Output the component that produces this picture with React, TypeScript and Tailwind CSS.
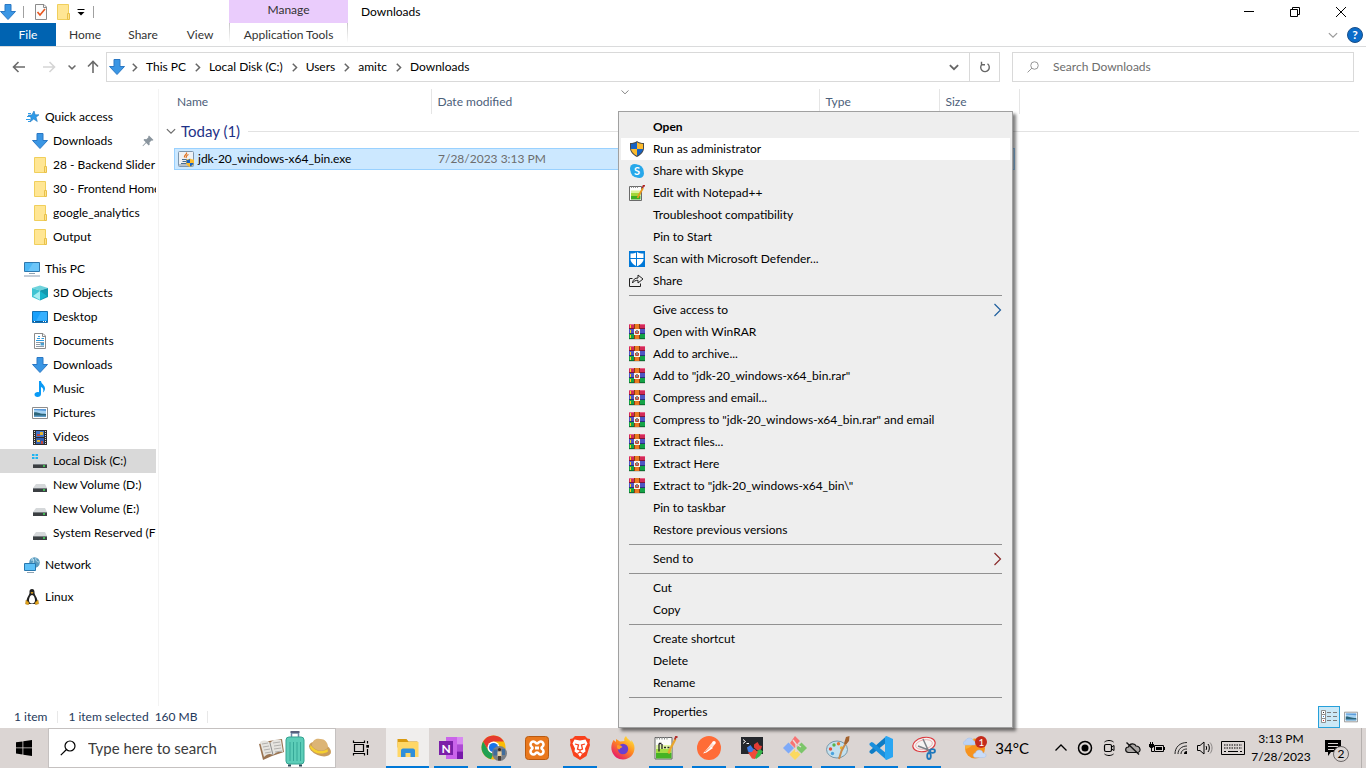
import React from "react";

type IconProps = { className?: string };

const svgProps = {
  xmlns: "http://www.w3.org/2000/svg",
  "aria-hidden": true,
  fill: "none",
};

/* ---------- small icons, 16 grid ---------- */

const DownArrowIcon = ({ className = "size-4" }: IconProps) => (
  <svg {...svgProps} viewBox="0 0 16 16" className={className}>
    <path d="M5 .5h6v7h4.5L8 15.5.5 7.500H5z" fill="#3a96e4" stroke="#2b78c4" />
  </svg>
);

const FolderIcon = ({ className = "size-4" }: IconProps) => (
  <svg {...svgProps} viewBox="0 0 16 16" className={className}>
    <path d="M2.500.5h11v15h-11z" fill="#ffe694" stroke="#f0cf5c" />
    <path d="M12.500 9.500h2v6h-2z" fill="#ffe38a" stroke="#e8c04a" />
  </svg>
);

const StarIcon = () => (
  <svg {...svgProps} viewBox="0 0 16 16" className="size-4">
    <path d="M10 2l1.200 3.800H15l-3 2.500 1.300 4.200-3.600-2.400L6 13l1.200-4.300L4 6.200l3.800-.3z" fill="#2f9be8" stroke="#1b76c0" strokeWidth=".6" />
    <path d="M4 4.500h3M3 7.500h3M2 10.500h4M4 12.500h2" stroke="#2f9be8" />
  </svg>
);

const PinIcon = () => (
  <svg {...svgProps} viewBox="0 0 12 12" className="size-3">
    <path d="M7 .5L11.500 5l-1.300.8-.7-.2-2 2 .2 2-.9.9-2.600-2.600L1 11.200l-.5-.5 3.200-3.400L1.500 5l.9-.9 2 .2 2-2-.2-.8z" fill="#8a959e" />
  </svg>
);

const ThisPcIcon = () => (
  <svg {...svgProps} viewBox="0 0 16 16" className="size-4">
    <path d="M.5 1.500h15v9H.5z" fill="#4db8f5" stroke="#2f78ad" />
    <path d="M9 2h6v8H4z" fill="#6cc6f9" />
    <path d="M5 12.500h6" stroke="#8fa3b3" />
    <path d="M0 15h16" stroke="#8b9cb0" />
  </svg>
);

const ObjectsIcon = () => (
  <svg {...svgProps} viewBox="0 0 16 16" className="size-4">
    <path d="M0 3l8-2.500L16 3 8 5.500z" fill="#6fd3dc" />
    <path d="M0 3l8 2.500v10L0 12z" fill="#3fc4d2" />
    <path d="M16 3L8 5.500v10l8-3.500z" fill="#1198ae" />
    <path d="M1 11l7-5v9z" fill="#a6eef2" />
    <path d="M8 6l7 5-7 4z" fill="#16b5cc" />
  </svg>
);

const DesktopIcon = () => (
  <svg {...svgProps} viewBox="0 0 16 16" className="size-4">
    <path d="M.5 2.500h15v11H.5z" fill="#18a0fb" stroke="#1271b5" />
    <path d="M9 3h6v8L4 12z" fill="#36b0ff" />
    <path d="M1 12.500h14" stroke="#0f5c96" />
    <path d="M2 12.500h1M11 12.500h1M13 12.500h1" stroke="#fff" />
  </svg>
);

const DocumentsIcon = () => (
  <svg {...svgProps} viewBox="0 0 16 16" className="size-4">
    <path d="M2.500.5H11l2.500 2.500v12.500h-11z" fill="#fff" stroke="#8b8b8b" />
    <path d="M10.500.5v3h3" stroke="#8b8b8b" />
    <path d="M6 3.500h2M5 5.500h3M9.500 5.500H12M4 7.500h8" stroke="#2c9be0" />
    <path d="M4 9.500h8M4 11.500h4M4 13.500h8" stroke="#8f9aa5" />
    <path d="M8.500 10h3.500v2.500H8.500z" fill="#4a9fd0" />
  </svg>
);

const MusicIcon = () => (
  <svg {...svgProps} viewBox="0 0 16 16" className="size-4">
    <path d="M7 0h2c.2 3 4 4 4 7.500 0 1.600-.8 3-2 4 .8-2.900.2-4.500-2-5.500v7c0 1.800-1.500 3-3.500 3-1.800 0-3-1-3-2.400C2.500 12 4 11 5.700 11c.5 0 .9 0 1.300.2z" fill="#0a9af5" />
  </svg>
);

const PicturesIcon = ({ className = "size-4" }: IconProps) => (
  <svg {...svgProps} viewBox="0 0 16 16" className={className}>
    <path d="M.5 2.500h15v11H.5z" fill="#fff" stroke="#8d8d8d" />
    <path d="M2 4h12v8H2z" fill="#a5d2f3" />
    <path d="M2 4h12v2L2 5z" fill="#5b9bdb" />
    <path d="M2 7.500c3-.8 5 1.500 12 1.500v2H2z" fill="#2d6579" />
    <path d="M2 10.500h12V12H2z" fill="#5f9cc7" />
  </svg>
);

const VideosIcon = () => (
  <svg {...svgProps} viewBox="0 0 16 16" className="size-4">
    <path d="M1 1h14v15H1z" fill="#2d2d2d" />
    <path d="M2.500 2v14M13.500 2v14" stroke="#dcdcdc" strokeDasharray="1 1" />
    <path d="M4 2h8v6H4z" fill="#3f74c8" />
    <path d="M4 9h8v6H4z" fill="#315fb0" />
    <path d="M8 3h3v3H8zM5 11h3v2H5z" fill="#e4b630" />
    <path d="M5 5h3v2H5zM9 12h2v3H9z" fill="#c4473a" />
  </svg>
);

const DriveIcon = ({ system }: { system?: boolean }) => (
  <svg {...svgProps} viewBox="0 0 16 16" className="size-4">
    <path d="M4 7h9l2 4H1z" fill="#d5d8da" />
    <path d="M1 11h14v4H1z" fill="#3b3f42" />
    <path d="M1 11.500h14" stroke="#777c80" />
    <path d="M11 13h2" stroke="#43e05a" strokeWidth="1.500" />
    {system && <path d="M0 1h2.500v2H0zM3.500 1H6v2H3.500zM0 4h2.500v2H0zM3.500 4H6v2H3.500z" fill="#1fb4f1" />}
  </svg>
);

const NetworkIcon = () => (
  <svg {...svgProps} viewBox="0 0 16 16" className="size-4">
    <circle cx="10.500" cy="5.500" r="5.300" fill="#5b9bbf" />
    <path d="M8 1c2 1 2 3 1 5m3-5c-1 2 1 4 3 4M7 3h3" stroke="#bfe2f1" />
    <path d="M.5 6.500h11v7H.5z" fill="#5cc0f8" stroke="#2878ae" />
    <path d="M3 15.500h7" stroke="#8fa3b3" />
  </svg>
);

const LinuxIcon = () => (
  <svg {...svgProps} viewBox="0 0 16 16" className="size-4">
    <path d="M8 0C6 0 5.300 1.500 5.500 3.500c.2 2.500-2.800 4.500-3 9L5 15h6l2.500-2.500c0-4-3-6.500-3-9C10.500 1.500 10 0 8 0z" fill="#222" />
    <path d="M8 6c-1.700 0-3 3-3 5.500 0 1.800 1.300 3 3 3s3-1.200 3-3C11 9 9.700 6 8 6z" fill="#fff" />
    <path d="M6.500 3.500L8 3l1.500.6L8 5z" fill="#e9a81c" />
    <path d="M2 11l3 2.500-.5 2.200L1.500 15zM14 11l-3 2.500.5 2.200 3.200-1z" fill="#e5a51a" stroke="#9b6b0a" strokeWidth=".4" />
  </svg>
);

const ShieldIcon = ({ className = "size-4" }: IconProps) => (
  <svg {...svgProps} viewBox="0 0 16 16" className={className}>
    <path d="M8 0c2 1.500 4 2 7 2v5c0 4-3 7-7 9-4-2-7-5-7-9V2c3 0 5-.5 7-2z" fill="#4a4a48" />
    <path d="M8 1.300V8H2V3c2.400 0 4.200-.5 6-1.700z" fill="#1763c4" />
    <path d="M8 1.300V8h6V3c-2.400 0-4.200-.5-6-1.700z" fill="#fdbb2d" />
    <path d="M2 8h6v6.800C4.800 13 2.300 11 2 8z" fill="#fdbb2d" />
    <path d="M14 8H8v6.800c3.200-1.800 5.700-3.800 6-6.800z" fill="#1763c4" />
  </svg>
);

const SkypeIcon = () => (
  <svg {...svgProps} viewBox="0 0 16 16" className="size-4">
    <circle cx="5.500" cy="5.500" r="4.500" fill="#28a8ea" />
    <circle cx="10.500" cy="10.500" r="4.500" fill="#28a8ea" />
    <circle cx="8" cy="8" r="6.500" fill="#28a8ea" />
    <text x="8" y="12" textAnchor="middle" fontSize="11" fontWeight="700" fill="#fff">S</text>
  </svg>
);

const NotepadIcon = ({ className = "size-4" }: IconProps) => (
  <svg {...svgProps} viewBox="0 0 16 16" className={className}>
    <path d="M.5 1.500h12v14H.5z" fill="#fdfdfd" stroke="#6a6a6a" />
    <path d="M2 5.500h9.500v4.500H2z" fill="#dcf29a" />
    <path d="M2 8h9.500v3H2z" fill="#a3d63a" />
    <path d="M2 11h9.500v3.500H2z" fill="#3fae22" />
    <path d="M2.500 1v2M4.500 1v2M6.500 1v2M8.500 1v2" stroke="#777" strokeWidth=".8" />
    <path d="M14 3L9.500 11l-.9 2" stroke="#e89a1e" strokeWidth="1.800" />
    <path d="M13.500 3l1-2.500 1.500.5" stroke="#ad2323" strokeWidth="1.600" />
  </svg>
);

const DefenderIcon = () => (
  <svg {...svgProps} viewBox="0 0 16 16" className="size-4">
    <path d="M0 0h16v16H0z" fill="#0078d7" />
    <path d="M8 1C6.300 2.300 4 2.600 1.500 2.600V8c0 3.300 3 5.800 6.500 7.300 3.500-1.500 6.500-4 6.500-7.300V2.600C12 2.600 9.700 2.300 8 1z" fill="#fff" />
    <path d="M7.500 1v14M1 7.500h14" stroke="#0078d7" />
  </svg>
);

const ShareIcon = () => (
  <svg {...svgProps} viewBox="0 0 16 16" className="size-4">
    <path d="M3.500 5.500h-3v8h11v-3" stroke="#222" />
    <path d="M3.500 10c.4-3.500 2.500-5 5.500-5V2l5 4-5 4V7.300C6.500 7.300 4.800 8 3.500 10z" stroke="#222" strokeLinejoin="round" />
  </svg>
);

const WinrarIcon = () => (
  <svg {...svgProps} viewBox="0 0 16 16" className="size-4">
    <path d="M0 0h16v5H0z" fill="#d42a58" />
    <path d="M0 5h16v5H0z" fill="#4f55c4" />
    <path d="M0 10h16v5H0z" fill="#14a347" />
    <path d="M0 .5h16" stroke="#e8638a" />
    <path d="M0 4.500h16" stroke="#7d1436" />
    <path d="M0 9.500h16" stroke="#2b2f7c" />
    <path d="M0 14.500h16" stroke="#0b7030" />
    <path d="M0 15.500h16" stroke="#c9cfc9" />
    <path d="M1.500 1v3M1.500 6v3M1.500 11v3" stroke="#f4d322" />
    <path d="M6 0h4v15H6z" fill="#ea7a22" />
    <path d="M5.500 0v15M10.500 0v15" stroke="#8b3a14" />
    <path d="M5 5h6v6H5z" fill="#f6f3ee" />
    <path d="M7 6h2v3H7z" fill="#8a8a8a" />
    <path d="M6.500 7v2.500h3V7" stroke="#c5432e" />
  </svg>
);

const JavaIcon = () => (
  <svg {...svgProps} viewBox="0 0 16 16" className="size-4">
    <rect x=".5" y=".5" width="15" height="15" rx="1" fill="#eef1f4" stroke="#7c95ac" />
    <path d="M1 13h14v2H1z" fill="#b4bfca" />
    <path d="M8.500 1.500c1 2-3 2.600-2 5M10.500 3.500C8 4 8.500 5.500 8 7" stroke="#e0701c" strokeWidth="1.200" />
    <path d="M4 8.500h5M4.500 10.500h4M3 12.500h6" stroke="#4a6f92" />
    <path d="M12 7.500c1.300.8 2.300 1 4 1v3c0 2-2 3.600-4 4.500-2-.9-4-2.500-4-4.500v-3c1.700 0 2.700-.2 4-1z" fill="#fdbb2d" />
    <path d="M12 8v4H8.500V9c1.300 0 2.400-.3 3.500-1zM12 12h3.500c-.2 1.700-2 2.800-3.500 3.500z" fill="#1763c4" />
  </svg>
);

const ChevronIcon = ({ className = "size-4", weight = 1.3 }: IconProps & { weight?: number }) => (
  <svg {...svgProps} viewBox="0 0 16 16" className={className}>
    <path d="M2.500 5.500L8 11l5.500-5.500" stroke="currentColor" strokeWidth={weight} />
  </svg>
);

const MagnifierIcon = ({ className = "size-4" }: IconProps) => (
  <svg {...svgProps} viewBox="0 0 16 16" className={className}>
    <circle cx="10" cy="6" r="5" stroke="currentColor" strokeWidth="1.200" />
    <path d="M6.500 9.500L.8 15.200" stroke="currentColor" strokeWidth="1.200" />
  </svg>
);

const ArrowIcon = ({ className = "size-4" }: IconProps) => (
  <svg {...svgProps} viewBox="0 0 16 16" className={className}>
    <path d="M14 8H2.500M7.500 3L2.500 8l5 5" stroke="currentColor" strokeWidth="1.600" />
  </svg>
);

/* ---------- taskbar icons, 24 grid ---------- */

const WindowsIcon = () => (
  <svg {...svgProps} viewBox="0 0 16 16" className="size-4">
    <path d="M0 2.300l6.500-.9v6.100H0zM7.300 1.300L16 0v7.500H7.300zM0 8.300h6.500v6.200L0 13.600zM7.300 8.300H16V16l-8.700-1.300z" fill="#000" />
  </svg>
);

const TaskViewIcon = () => (
  <svg {...svgProps} viewBox="0 0 18 16" className="h-4 w-[18px]">
    <path d="M2.500 4.500h9v7h-9zM1.500.5v2h11v-2M1.500 15.500v-2h11v2M15.500 1v2.500M15.500 9v6" stroke="#000" strokeWidth="1.200" />
    <path d="M14.300 5h2.700v2.700h-2.700z" fill="#000" />
  </svg>
);

const SearchArtIcon = () => (
  <svg {...svgProps} viewBox="0 0 74 38" className="h-[38px] w-[74px] shrink-0">
    {/* open book */}
    <path d="M0 15l10-3 13-2 2 13-12 4-9 4z" fill="#9a7452" />
    <path d="M1 13c4-2 7-2 10 1 3-4 7-4 11-3l2 12c-4-1-7 0-10 3-3-2-6-1-9 2z" fill="#e6e4df" />
    <path d="M11 14l3 12" stroke="#8c8c8c" />
    <path d="M3 15l6-1M4 18l6-1M5 21l6-1M6 24l6-1M14 14l7-1M15 17l7-1M15 20l7-1M16 23l7-1" stroke="#a3a29f" strokeWidth=".8" />
    {/* suitcase */}
    <path d="M32.500 9V4h7v5" stroke="#6f86a6" strokeWidth="1.500" />
    <path d="M31.500 3h9" stroke="#59607c" strokeWidth="2" />
    <rect x="27" y="8" width="18" height="27" rx="3" fill="#5ccdb8" stroke="#34a391" />
    <path d="M31 13v19M34.500 13v19M38 13v19M41.500 13v19" stroke="#36a898" />
    <path d="M29 36.500h3M40 36.500h3" stroke="#2d4b59" strokeWidth="2" />
    {/* hat */}
    <ellipse cx="61" cy="20" rx="11.500" ry="6.500" transform="rotate(22 61 20)" fill="#c99c5b" />
    <path d="M53 17c0-6 4-8 8-7 4-.5 8 3 8 8-4 6-12 4-16-1z" fill="#dcb475" />
    <path d="M51.500 16c4 6 11 8 17 4l.5 2.500c-6 4-15 2-18-4z" fill="#f6d02f" />
  </svg>
);

const ExplorerIcon = () => (
  <svg {...svgProps} viewBox="0 0 24 24" className="size-6">
    <path d="M1.500 3h9l2 2.500h9v6h-20z" fill="#d99a10" />
    <path d="M1.500 6h21v15h-21z" fill="#ffd767" />
    <path d="M5 21v-6.500c0-1 .8-2 2-2h10c1.200 0 2 1 2 2V21h-4.500v-4h-5v4z" fill="#2f8fdb" />
  </svg>
);

const OneNoteIcon = () => (
  <svg {...svgProps} viewBox="0 0 24 24" className="size-6">
    <path d="M7 1h17v22H7z" fill="#ca64ea" />
    <path d="M18 1h6v7.500h-6z" fill="#d889f1" />
    <path d="M18 8.500h6v7h-6z" fill="#ae4bd5" />
    <path d="M18 15.500h6V23h-6z" fill="#7719aa" />
    <path d="M0 5h14v14H0z" fill="#7b1fa8" />
    <text x="7" y="16.500" textAnchor="middle" fontSize="12" fontWeight="700" fill="#fff">N</text>
  </svg>
);

const ChromeIcon = () => (
  <svg {...svgProps} viewBox="0 0 26 26" className="size-[26px]">
    <circle cx="12.500" cy="12.500" r="12" fill="#fbbc04" />
    <path d="M2.100 6.500A12 12 0 0 1 22.900 6.500H12.500L7.300 15.500z" fill="#e53a2e" />
    <path d="M2.100 6.500l5.200 9 5.200 3L10 24.200A12 12 0 0 1 2.100 6.500z" fill="#21a052" />
    <circle cx="12.500" cy="12.500" r="6" fill="#fff" />
    <circle cx="12.500" cy="12.500" r="4.600" fill="#1a73e8" />
    <circle cx="18.500" cy="18.500" r="7.500" fill="#7b7f85" />
    <path d="M12.500 14.500h4v6h-4zM21 14h3v6h-3z" fill="#3f6c9c" />
    <circle cx="18.500" cy="14.500" r="1.600" fill="#3c2a20" />
    <path d="M16.500 16.500h4v5h-4z" fill="#e9cfa0" />
    <path d="M17 21h3v4.500h-3z" fill="#493f3a" />
  </svg>
);

const XamppIcon = () => (
  <svg {...svgProps} viewBox="0 0 24 24" className="size-6">
    <rect x=".5" y=".5" width="23" height="23" rx="3" fill="#e9781d" stroke="#b95a10" />
    <path d="M8.500 5.500a3 3 0 0 0-3 3c0 2.500 2 2 2 3.500s-2 1-2 3.500a3 3 0 0 0 3 3c2 0 2-2 3.500-2s1.500 2 3.500 2a3 3 0 0 0 3-3c0-2.500-2-2-2-3.500s2-1 2-3.500a3 3 0 0 0-3-3c-2 0-2 2-3.500 2s-1.500-2-3.500-2z" stroke="#fff" strokeWidth="2.600" />
    <path d="M10 12h4" stroke="#fff" strokeWidth="3" />
  </svg>
);

const BraveIcon = () => (
  <svg {...svgProps} viewBox="0 0 24 24" className="size-6">
    <path d="M7 0h10l2.500 2.500L22 3l-.5 4 .5 2-3.500 11L12 24l-6.500-4L2 9l.5-2L2 3l2.500-.5z" fill="#f9421d" />
    <path d="M12 4.500l5.500-1 2 4-2.500 5 .5 3L14 18l-2 3-2-3-3.500-2.500.5-3-2.500-5 2-4z" fill="#fff" />
    <path d="M7 8l3.500 1-1 4 2.500 1 2.500-1-1-4L17 8M12 14v3M9.500 17.500L12 16l2.500 1.500" stroke="#f9421d" strokeWidth="1.300" />
  </svg>
);

const FirefoxIcon = () => (
  <svg {...svgProps} viewBox="0 0 24 24" className="size-6">
    <defs>
      <linearGradient id="fx" x1="20" y1="2" x2="5" y2="22" gradientUnits="userSpaceOnUse">
        <stop stopColor="#ffe03c" />
        <stop offset=".45" stopColor="#ff8a1f" />
        <stop offset="1" stopColor="#e6186c" />
      </linearGradient>
    </defs>
    <path d="M15 0c-2 2-2 3.500-1.500 5L9 5.500 5 3v3L2.500 4C.8 7-.5 11 1 15.500 2.700 20.500 7 23.500 12 23.500c6.500 0 11.500-5 11.500-11.500 0-3.500-1.500-6-3.500-8l.5 2.500C19 4 16 3 15 0z" fill="url(#fx)" />
    <circle cx="12" cy="13" r="5.200" fill="#6b3fd0" />
    <path d="M6 9.500c2-1 4 0 5.500 1.500-1 1-2.500.5-3 2.500-2 0-3-2-2.500-4z" fill="#ff9a24" />
  </svg>
);

const NotepadPlusIcon = () => (
  <svg {...svgProps} viewBox="0 0 24 24" className="size-6">
    <path d="M1 1.500h17V23H1z" fill="#fbfcf9" stroke="#666" />
    <path d="M2 9h15.500v5H2z" fill="#dff5a4" />
    <path d="M2 13h15.500v4H2z" fill="#a6de44" />
    <path d="M2 17h15.500v5.500H2z" fill="#46b324" />
    <path d="M3 1v2.500M5.500 1v2.500M8 1v2.500M10.500 1v2.500M13 1v2.500" stroke="#888" />
    <path d="M5 7.500v8M8 8v5M5 7.500h2.500M10 11.500h2M13.500 11.500h2" stroke="#222" strokeWidth="1.300" />
    <path d="M21.500 3l-5.500 10.500-1.500 4" stroke="#e9a52c" strokeWidth="2.200" />
    <path d="M20.800 3.500l1.200-3 1.500 1" stroke="#b33030" strokeWidth="1.800" />
  </svg>
);

const PostmanIcon = () => (
  <svg {...svgProps} viewBox="0 0 24 24" className="size-6">
    <circle cx="12" cy="12" r="12" fill="#ff6c37" />
    <path d="M6 17.500l7-8 3 2.500-6.500 4.500z" fill="#fff" />
    <path d="M12.500 9.500l3-3.500 2.500 2-2.500 3.500z" fill="#ffe0d3" />
    <circle cx="17" cy="6.800" r="1.800" fill="#fff" />
    <path d="M8 16l5.500-5" stroke="#ff6c37" strokeWidth=".7" />
  </svg>
);

const TerminalIcon = () => (
  <svg {...svgProps} viewBox="0 0 24 24" className="size-6">
    <path d="M1 1h22v17H1z" fill="#24272c" />
    <path d="M3 3.500l2.500 2L3 7.500M6.500 7.500H9" stroke="#fff" />
    <path d="M7 11.500l3.500-2.500 2.500 3.500 3 1.500-4 3.500-4-2z" fill="#3a7be8" />
    <path d="M14 8.500l3.500-2.500 2 3.500 2.500.5-1 3.500-3.500 1-3.500-3z" fill="#e23c34" />
    <path d="M16 16l4-3 3 2.500-3 4.500-4 3-3-3z" fill="#37b34a" />
    <path d="M8 16.500l4-.5 2-3 4 3-2 3-1 4-3-.5z" fill="#f04a3a" />
  </svg>
);

const GitIcon = () => (
  <svg {...svgProps} viewBox="0 0 24 24" className="size-6">
    <path d="M12 0l5 5-2.500 2.500 1 1.500-3.500 3-5-5z" fill="#f77474" />
    <path d="M5.500 6.500l5.500 5.500-5.500 5.500L0 12z" fill="#7eaaf8" />
    <path d="M18.500 6.500L24 12l-5.500 5.500L13 12z" fill="#7cc66a" />
    <path d="M12 13l5.500 5.500L12 24l-5.500-5.500z" fill="#fbd95f" />
    <path d="M10 4l3 4v8M13 8l5 3" stroke="#e6dcd8" strokeWidth="1.400" />
  </svg>
);

const PaintIcon = () => (
  <svg {...svgProps} viewBox="0 0 24 24" className="size-6">
    <ellipse cx="11" cy="13.500" rx="10.500" ry="8.500" fill="#c3e0ee" stroke="#7797a8" />
    <circle cx="4.500" cy="13" r="1.700" fill="#e04f3b" />
    <circle cx="8" cy="9" r="1.700" fill="#5ab44c" />
    <circle cx="12.500" cy="7.800" r="1.700" fill="#e8742f" />
    <circle cx="15.500" cy="12" r="1.700" fill="#ecb52a" />
    <circle cx="6.500" cy="17.500" r="1.700" fill="#4aa3df" />
    <path d="M21.500 4l-6 11-2.500 8" stroke="#c98a4c" strokeWidth="2" />
    <path d="M20 1l3.500-1-.5 5-3 3.500-2-1z" fill="#a3622e" />
  </svg>
);

const VsCodeIcon = () => (
  <svg {...svgProps} viewBox="0 0 24 24" className="size-6">
    <path d="M17.500 0v6.500L4 17.500 2.500 18 .5 16.500v-1.500z" fill="#0e7cc4" />
    <path d="M17.500 24v-6.500L4 6.500 2.500 6 .5 7.500V9z" fill="#1a8fdc" />
    <path d="M17.500 0L24 3v18l-6.500 3-1.500-1V1z" fill="#2aa6f2" />
  </svg>
);

const SnipIcon = () => (
  <svg {...svgProps} viewBox="0 0 24 24" className="size-6">
    <ellipse cx="12" cy="8.500" rx="11.300" ry="7" transform="rotate(-12 12 8.500)" fill="#f5f3f2" stroke="#dc3a3f" strokeWidth="1.200" />
    <ellipse cx="12" cy="8.500" rx="8.500" ry="4.600" transform="rotate(-12 12 8.500)" stroke="#e9a3a5" strokeWidth=".8" />
    <path d="M11 3l6 13M6 10l12 4.500" stroke="#7c8288" strokeWidth="1.500" />
    <ellipse cx="20.500" cy="15" rx="2.500" ry="1.800" stroke="#1d77bb" strokeWidth="1.800" />
    <ellipse cx="17" cy="20" rx="1.800" ry="3" stroke="#1d77bb" strokeWidth="1.800" />
  </svg>
);

const WeatherIcon = () => (
  <svg {...svgProps} viewBox="0 0 24 24" className="size-6">
    <circle cx="12" cy="12.500" r="10" fill="#f7931e" />
    <path d="M2 13a10 10 0 0 1 9-10c0 5-3 9-9 10z" fill="#fbb034" />
    <path d="M2.500 9C-.5 9-.5 5 2.500 5c.5-4 7.500-4 8 0 3 0 3 4 .5 4z" fill="#bcd3f5" stroke="#a3bfea" strokeWidth=".5" />
    <path d="M12.500 21.500c-3 0-3-4.500 0-4.500.5-4 7-4 7.500 0 4 0 4 4.500.5 4.500z" fill="#c9dcf8" stroke="#a3bfea" strokeWidth=".5" />
  </svg>
);

const RecordIcon = () => (
  <svg {...svgProps} viewBox="0 0 16 16" className="size-4">
    <circle cx="8" cy="8" r="6.500" stroke="#000" strokeWidth="1.500" />
    <circle cx="8" cy="8" r="3.500" fill="#000" />
  </svg>
);

const MeetIcon = () => (
  <svg {...svgProps} viewBox="0 0 16 16" className="size-4">
    <rect x="3.500" y="4.500" width="7" height="7" rx="1.500" stroke="#000" strokeWidth="1.200" />
    <path d="M10.500 7l2.500-1.500v5L10.500 9M3.500 2C6 0 10 0 12.500 2M3.500 14c2.500 2 6.500 2 9 0" stroke="#000" />
  </svg>
);

const CloudOffIcon = () => (
  <svg {...svgProps} viewBox="0 0 16 16" className="size-4">
    <path d="M3.500 12.500c-4-.5-3.500-5.500 0-5.500 1-4 6.500-4 7.500-1 4.500 0 5.500 6 1.500 6.500z" fill="#a9a5a3" stroke="#111" strokeWidth="1.200" />
    <path d="M1.500 2.500l12.500 12" stroke="#111" strokeWidth="1.400" />
  </svg>
);

const BatteryIcon = () => (
  <svg {...svgProps} viewBox="0 0 16 16" className="size-4">
    <path d="M5.500 5.500h9v6h-9z" stroke="#000" />
    <path d="M7 7h6v3H7zM15 7h1v3h-1z" fill="#000" />
    <path d="M0 4h5v2.500L3.500 8h-2L0 6.500z" fill="#000" />
    <path d="M1.500 2v2M3.500 2v2M2.500 8v3.500H5" stroke="#000" />
  </svg>
);

const WifiIcon = () => (
  <svg {...svgProps} viewBox="0 0 16 16" className="size-4">
    <path d="M2 14C2 7 7 2.500 14 2.500M5 14c0-4.500 3.500-8 9-8M8 14c0-2.800 2.300-5 6-5" stroke="#222" />
    <path d="M11 14a3 3 0 0 1 3-3v3z" fill="#000" />
  </svg>
);

const VolumeIcon = () => (
  <svg {...svgProps} viewBox="0 0 16 16" className="size-4">
    <path d="M.5 5.500h2.500L7 2v12L3 10.500H.5z" stroke="#000" />
    <path d="M9 6c.8 1 .8 3 0 4M11 4c1.800 2 1.800 6 0 8" stroke="#000" />
    <path d="M13 2.500c2.700 3 2.700 8 0 11" stroke="#8a8685" />
  </svg>
);

const KeyboardIcon = () => (
  <svg {...svgProps} viewBox="0 0 24 14" className="h-3.5 w-6">
    <path d="M.5.5h23v13H.5z" stroke="#000" />
    <path d="M3 4h18M3 7h18" stroke="#000" strokeWidth="1.200" strokeDasharray="1.500 1" />
    <path d="M3 10.500h2M7 10.500h10M19 10.500h2" stroke="#000" strokeWidth="1.200" />
  </svg>
);

/* ---------- data ---------- */

interface NavItem {
  label: string;
  icon: React.ReactNode;
  pinned?: boolean;
  active?: boolean;
}

interface MenuItem {
  label: string;
  icon?: React.ReactNode;
  bold?: boolean;
  hover?: boolean;
  arrow?: string;
}

const quickAccess: NavItem[] = [
  { label: "Downloads", icon: <DownArrowIcon />, pinned: true },
  { label: "28 - Backend Slider", icon: <FolderIcon /> },
  { label: "30 - Frontend Home", icon: <FolderIcon /> },
  { label: "google_analytics", icon: <FolderIcon /> },
  { label: "Output", icon: <FolderIcon /> },
];

const thisPc: NavItem[] = [
  { label: "3D Objects", icon: <ObjectsIcon /> },
  { label: "Desktop", icon: <DesktopIcon /> },
  { label: "Documents", icon: <DocumentsIcon /> },
  { label: "Downloads", icon: <DownArrowIcon /> },
  { label: "Music", icon: <MusicIcon /> },
  { label: "Pictures", icon: <PicturesIcon /> },
  { label: "Videos", icon: <VideosIcon /> },
  { label: "Local Disk (C:)", icon: <DriveIcon system />, active: true },
  { label: "New Volume (D:)", icon: <DriveIcon /> },
  { label: "New Volume (E:)", icon: <DriveIcon /> },
  { label: "System Reserved (F:)", icon: <DriveIcon /> },
];

const tree: { label: string; icon: React.ReactNode; items: NavItem[] }[] = [
  { label: "Quick access", icon: <StarIcon />, items: quickAccess },
  { label: "This PC", icon: <ThisPcIcon />, items: thisPc },
  { label: "Network", icon: <NetworkIcon />, items: [] },
  { label: "Linux", icon: <LinuxIcon />, items: [] },
];

const menuGroups: MenuItem[][] = [
  [
    { label: "Open", bold: true },
    { label: "Run as administrator", icon: <ShieldIcon />, hover: true },
    { label: "Share with Skype", icon: <SkypeIcon /> },
    { label: "Edit with Notepad++", icon: <NotepadIcon /> },
    { label: "Troubleshoot compatibility" },
    { label: "Pin to Start" },
    { label: "Scan with Microsoft Defender...", icon: <DefenderIcon /> },
    { label: "Share", icon: <ShareIcon /> },
  ],
  [
    { label: "Give access to", arrow: "text-[#1f5f9e]" },
    { label: "Open with WinRAR", icon: <WinrarIcon /> },
    { label: "Add to archive...", icon: <WinrarIcon /> },
    { label: 'Add to "jdk-20_windows-x64_bin.rar"', icon: <WinrarIcon /> },
    { label: "Compress and email...", icon: <WinrarIcon /> },
    { label: 'Compress to "jdk-20_windows-x64_bin.rar" and email', icon: <WinrarIcon /> },
    { label: "Extract files...", icon: <WinrarIcon /> },
    { label: "Extract Here", icon: <WinrarIcon /> },
    { label: 'Extract to "jdk-20_windows-x64_bin\\"', icon: <WinrarIcon /> },
    { label: "Pin to taskbar" },
    { label: "Restore previous versions" },
  ],
  [{ label: "Send to", arrow: "text-[#8a2a2a]" }],
  [{ label: "Cut" }, { label: "Copy" }],
  [{ label: "Create shortcut" }, { label: "Delete" }, { label: "Rename" }],
  [{ label: "Properties" }],
];

const taskbarApps = [
  { name: "File Explorer", icon: <ExplorerIcon />, state: "active" },
  { name: "OneNote", icon: <OneNoteIcon />, state: "running" },
  { name: "Chrome", icon: <ChromeIcon />, state: "running" },
  { name: "XAMPP", icon: <XamppIcon />, state: "idle" },
  { name: "Brave", icon: <BraveIcon />, state: "running" },
  { name: "Firefox", icon: <FirefoxIcon />, state: "idle" },
  { name: "Notepad++", icon: <NotepadPlusIcon />, state: "running" },
  { name: "Postman", icon: <PostmanIcon />, state: "running" },
  { name: "Cmder", icon: <TerminalIcon />, state: "running" },
  { name: "Git", icon: <GitIcon />, state: "running" },
  { name: "Paint", icon: <PaintIcon />, state: "running" },
  { name: "VS Code", icon: <VsCodeIcon />, state: "running" },
  { name: "Snipping Tool", icon: <SnipIcon />, state: "running" },
];

const trayIcons = [
  { name: "Hidden icons", icon: <ChevronIcon className="size-4 rotate-180" /> },
  { name: "Recorder", icon: <RecordIcon /> },
  { name: "Meet Now", icon: <MeetIcon /> },
  { name: "OneDrive", icon: <CloudOffIcon /> },
  { name: "Battery", icon: <BatteryIcon /> },
  { name: "Wi-Fi", icon: <WifiIcon /> },
  { name: "Volume", icon: <VolumeIcon /> },
];

/* ---------- window ---------- */

const TitleBar = () => (
  <header className="box-content flex h-[46px] border-b border-[#dadbdc]">
    <div className="flex w-[229px] shrink-0 flex-col">
      <div className="flex h-[23px] items-center">
        <DownArrowIcon />
        <span className="ml-[7px] h-3 w-px bg-[#a0a0a0]" />
        <button aria-label="Properties" className="ml-[9px]">
          <svg {...svgProps} viewBox="0 0 16 16" className="size-4">
            <path d="M2.500.5H11l2.500 2.500v12.500h-11z" fill="#fbfbfb" stroke="#8b8b8b" />
            <path d="M10.500.5v3h3" stroke="#8b8b8b" />
            <path d="M4.500 8l2.500 3 5-6" stroke="#e8551d" strokeWidth="1.600" />
          </svg>
        </button>
        <button aria-label="New folder" className="ml-1.5">
          <FolderIcon />
        </button>
        <button aria-label="Customize" className="ml-1.5">
          <svg {...svgProps} viewBox="0 0 8 8" className="size-2">
            <path d="M.5 1.500h7" stroke="#000" />
            <path d="M.5 4h7L4 7.500z" fill="#000" />
          </svg>
        </button>
        <span className="ml-2 h-3 w-px bg-[#a0a0a0]" />
      </div>
      <nav className="flex h-[23px] text-[#333]">
        <button className="w-14 bg-[#0063b1] text-white">File</button>
        <button className="w-[58px]">Home</button>
        <button className="w-[58px]">Share</button>
        <button className="w-14">View</button>
      </nav>
    </div>
    <div className="flex w-[119px] shrink-0 flex-col text-[#333]">
      <div className="h-[23px] bg-[#eaccfc] text-center leading-5">Manage</div>
      <div className="flex h-[23px] justify-between">
        <span className="h-5 w-px bg-linear-to-b from-[#c8c8c8] to-white" />
        <button className="whitespace-nowrap">Application Tools</button>
        <span className="h-5 w-px bg-linear-to-b from-[#c8c8c8] to-white" />
      </div>
    </div>
    <h1 className="ml-[13px] h-[23px] leading-[23px]">Downloads</h1>
    <div className="ml-auto flex flex-col">
      <div className="mr-0.5 flex h-[23px]">
        <button aria-label="Minimize" className="flex w-[46px] items-center justify-center">
          <svg {...svgProps} viewBox="0 0 10 10" className="size-2.5">
            <path d="M0 4.500h10" stroke="#000" />
          </svg>
        </button>
        <button aria-label="Restore" className="flex w-[46px] items-center justify-center">
          <svg {...svgProps} viewBox="0 0 10 10" className="size-2.5">
            <path d="M.5 2.500h7v7h-7zM2.500 2V.5h7v7H8" stroke="#000" />
          </svg>
        </button>
        <button aria-label="Close" className="flex w-[46px] items-center justify-center">
          <svg {...svgProps} viewBox="0 0 10 10" className="size-2.5">
            <path d="M0 0l10 10M10 0L0 10" stroke="#000" />
          </svg>
        </button>
      </div>
      <div className="flex h-[23px] items-center justify-end gap-2 pr-[3px]">
        <button aria-label="Collapse ribbon" className="text-[#9a9a9a]">
          <ChevronIcon className="size-3" weight={1.6} />
        </button>
        <button aria-label="Help" className="size-4 rounded-full border border-[#1a4f8a] bg-[#0a6cc9] text-center leading-[14px] font-bold text-white">
          ?
        </button>
      </div>
    </div>
  </header>
);

const AddressBar = () => (
  <div className="flex h-[42px] shrink-0 items-start pt-[5px] pr-3">
    <div className="flex h-[30px] w-[106px] shrink-0 items-center text-[#6b6b6b]">
      <button aria-label="Back" className="ml-[11px]">
        <ArrowIcon />
      </button>
      <button aria-label="Forward" className="ml-3.5 text-[#d5d5d5]">
        <ArrowIcon className="size-4 rotate-180" />
      </button>
      <button aria-label="Recent" className="ml-2.5">
        <ChevronIcon className="size-2.5" weight={2.4} />
      </button>
      <button aria-label="Up" className="ml-2">
        <ArrowIcon className="size-4 rotate-90" />
      </button>
    </div>
    <div className="flex h-[30px] grow items-center border border-[#d9d9d9] pl-0.5">
      <DownArrowIcon />
      {["This PC", "Local Disk (C:)", "Users", "amitc", "Downloads"].map((part) => (
        <React.Fragment key={part}>
          <ChevronIcon className="mx-1 size-[11px] -rotate-90 text-[#666]" weight={2.2} />
          <button className="px-0.5">{part}</button>
        </React.Fragment>
      ))}
      <button aria-label="Previous locations" className="ml-auto flex w-[30px] justify-center text-[#666]">
        <ChevronIcon className="size-3" weight={2.4} />
      </button>
      <button aria-label="Refresh" className="flex h-full w-[30px] items-center justify-center border-l border-[#d9d9d9]">
        <svg {...svgProps} viewBox="0 0 12 12" className="size-3">
          <path d="M3 3.200A4.300 4.300 0 1 0 8.500 2.800M2.500.8v3h3.500" stroke="#666" strokeWidth="1.400" />
        </svg>
      </button>
    </div>
    <div className="ml-3 flex h-[30px] w-[342px] shrink-0 items-center border border-[#d9d9d9] pl-3.5 text-[#8b8b8b]">
      <MagnifierIcon className="size-3" />
      <input
        type="text"
        aria-label="Search Downloads"
        placeholder="Search Downloads"
        className="ml-3.5 grow outline-none placeholder:text-[#6d6d6d]"
      />
    </div>
  </div>
);

const Sidebar = () => (
  <aside className="flex w-[159px] shrink-0 flex-col gap-2 overflow-hidden border-r border-[#f3f3f3] pt-4 pr-0.5">
    {tree.map((group) => (
      <div key={group.label}>
        <button className="flex h-6 w-full items-center gap-[5px] pl-6">
          {group.icon}
          {group.label}
        </button>
        {group.items.map((item) => (
          <button
            key={item.label}
            className={`flex h-6 w-full items-center gap-[5px] overflow-hidden pl-8 whitespace-nowrap ${item.active ? "bg-[#d9d9d9]" : ""}`}
          >
            <span className="shrink-0">{item.icon}</span>
            {item.label}
            {item.pinned && (
              <span className="ml-auto pr-0.5">
                <PinIcon />
              </span>
            )}
          </button>
        ))}
      </div>
    ))}
  </aside>
);

const FileList = () => (
  <main className="min-w-0 grow">
    <table className="w-full table-fixed text-left">
      <colgroup>
        <col className="w-[272px]" />
        <col className="w-[388px]" />
        <col className="w-[120px]" />
        <col className="w-20" />
        <col />
      </colgroup>
      <thead className="text-[#4c607a]">
        <tr className="h-[25px]">
          <th className="border-r border-[#e5e5e5] pl-[18px] font-normal">Name</th>
          <th className="relative border-r border-[#e5e5e5] pl-1.5 font-normal">
            Date modified
            <ChevronIcon className="absolute -top-0.5 left-1/2 size-2.5 -translate-x-1/2 text-[#666]" />
          </th>
          <th className="border-r border-[#e5e5e5] pl-1.5 font-normal">Type</th>
          <th className="border-r border-[#e5e5e5] pl-1.5 font-normal">Size</th>
          <th />
        </tr>
      </thead>
      <tbody>
        <tr>
          <td colSpan={5} className="pt-0.5 pr-[7px] pb-0.5 pl-1.5">
            <button className="flex h-[30px] w-full items-center gap-1 text-[15px] text-[#1e3287]">
              <ChevronIcon className="size-3 text-[#6d6d6d]" weight={1.6} />
              Today (1)
              <span className="ml-1 h-px grow bg-[#e2e2e2]" />
            </button>
          </td>
        </tr>
        <tr>
          <td className="pl-[15px]">
            <div className="flex h-[22px] items-center gap-1 border-y border-l border-[#99d1ff] bg-[#cce8ff] pl-[3px]">
              <JavaIcon />
              jdk-20_windows-x64_bin.exe
            </div>
          </td>
          <td>
            <div className="h-[22px] border-y border-[#99d1ff] bg-[#cce8ff] pl-[7px] leading-5 text-[#6d6d6d]">7/28/2023 3:13 PM</div>
          </td>
          <td>
            <div className="h-[22px] border-y border-[#99d1ff] bg-[#cce8ff]" />
          </td>
          <td className="pr-1">
            <div className="h-[22px] border-y border-r border-[#99d1ff] bg-[#cce8ff]" />
          </td>
          <td />
        </tr>
      </tbody>
    </table>
  </main>
);

const StatusBar = () => (
  <footer className="flex h-[22px] shrink-0 items-center pr-1 pl-3.5 text-[#1e395b]">
    <span>1 item</span>
    <span className="mx-2.5 h-3 w-px bg-[#e8e8e8]" />
    <span>1 item selected</span>
    <span className="ml-1.5">160 MB</span>
    <span className="ml-2.5 h-3 w-px bg-[#e8e8e8]" />
    <button aria-label="Details view" className="ml-auto flex size-[22px] items-center justify-center border border-[#26a0da] bg-[#cbe8f6]">
      <svg {...svgProps} viewBox="0 0 16 14" className="h-3.5 w-4">
        <path d="M.5.5h4v4h-4zM.5 4.500h4v4h-4zM.5 8.500h4v4h-4z" fill="#fff" stroke="#8d8d8d" />
        <path d="M2 2.500h1" stroke="#333" />
        <path d="M2 6.500h1" stroke="#2c7fd0" />
        <path d="M2 10.500h1" stroke="#d03030" />
        <path d="M6 2.500h4M12 2.500h4M6 6.500h4M12 6.500h4M6 10.500h4M12 10.500h4" stroke="#7c7c7c" />
      </svg>
    </button>
    <button aria-label="Large icons view" className="flex size-[22px] items-center justify-center">
      <PicturesIcon className="size-3.5" />
    </button>
  </footer>
);

const ContextMenu = () => (
  <div role="menu" className="absolute top-[111px] left-[618px] w-[395px] border border-[#a0a0a0] bg-[#eeeeee] px-0.5 py-1 shadow-[3px_3px_3px_rgba(0,0,0,0.5)]">
    {menuGroups.map((group, i) => (
      <div key={i}>
        {i > 0 && <hr className="mx-2 my-[3px] border-[#919191]" />}
        {group.map((item) => (
          <button
            key={item.label}
            role="menuitem"
            className={`flex h-[22px] w-full items-center pr-2 pl-2 text-left ${item.hover ? "bg-white" : ""}`}
          >
            <span className="w-6 shrink-0">{item.icon}</span>
            <span className={item.bold ? "font-bold" : ""}>{item.label}</span>
            {item.arrow && (
              <svg {...svgProps} viewBox="0 0 8 14" className={`ml-auto h-3.5 w-2 ${item.arrow}`}>
                <path d="M.5 1l6 6-6 6" stroke="currentColor" strokeWidth="1.200" />
              </svg>
            )}
          </button>
        ))}
      </div>
    ))}
  </div>
);

const Taskbar = () => (
  <div className="flex h-10 shrink-0 bg-[#dbd5d3]">
    <button aria-label="Start" className="flex w-12 items-center justify-center">
      <WindowsIcon />
    </button>
    <div className="flex w-[288px] items-center border border-[#c5c1c0] bg-white pr-0.5 pl-[11px] text-black">
      <MagnifierIcon className="size-4" />
      <input
        type="text"
        aria-label="Type here to search"
        placeholder="Type here to search"
        className="ml-3 w-[160px] grow text-[15px] outline-none placeholder:text-[#3c3c3c]"
      />
      <SearchArtIcon />
    </div>
    <button aria-label="Task View" className="flex w-[50px] items-center justify-center">
      <TaskViewIcon />
    </button>
    {taskbarApps.map((app) => (
      <button
        key={app.name}
        aria-label={app.name}
        className={`flex w-[43px] flex-col items-center ${app.state === "active" ? "bg-[#f0eeed]" : ""}`}
      >
        <span className="flex grow items-center pt-0.5">{app.icon}</span>
        <span className={`h-0.5 ${app.state === "active" ? "w-full bg-[#0078d7]" : app.state === "running" ? "w-[34px] bg-[#0078d7]" : ""}`} />
      </button>
    ))}
    <button className="ml-auto flex items-center gap-2 pr-5 text-[15px]">
      <span className="relative">
        <WeatherIcon />
        <span className="absolute top-0 right-0 size-3 rounded-full bg-[#c42b1c] text-center text-[10px] leading-3 text-white">1</span>
      </span>
      34°C
    </button>
    {trayIcons.map((t) => (
      <button key={t.name} aria-label={t.name} className="flex w-6 items-center justify-center">
        {t.icon}
      </button>
    ))}
    <button aria-label="Touch keyboard" className="flex w-8 items-center justify-center">
      <KeyboardIcon />
    </button>
    <button className="w-16 text-center leading-[18px]">
      3:13 PM
      <br />
      7/28/2023
    </button>
    <button aria-label="Notifications" className="flex w-12 items-center pl-3">
      <span className="relative">
        <svg {...svgProps} viewBox="0 0 18 18" className="size-[18px]">
          <path d="M0 1h16v12H6l-3 4v-4H0z" fill="#000" />
          <path d="M3 4.500h10M3 7.500h10M3 10.500h6" stroke="#dbd5d3" />
        </svg>
        <span className="absolute top-[7px] left-2 size-4 rounded-full border border-[#6a6666] bg-[#dbd5d3] text-center leading-[14px]">2</span>
      </span>
    </button>
    <span className="w-[5px] border-l border-[#b5b0ae]" />
  </div>
);

const App: React.FC = () => (
  <div className="relative flex min-h-screen flex-col overflow-hidden bg-white font-['Lato',sans-serif] text-[12px] leading-4 text-black">
    <TitleBar />
    <AddressBar />
    <div className="flex grow">
      <Sidebar />
      <FileList />
    </div>
    <StatusBar />
    <ContextMenu />
    <Taskbar />
  </div>
);

export default App;
